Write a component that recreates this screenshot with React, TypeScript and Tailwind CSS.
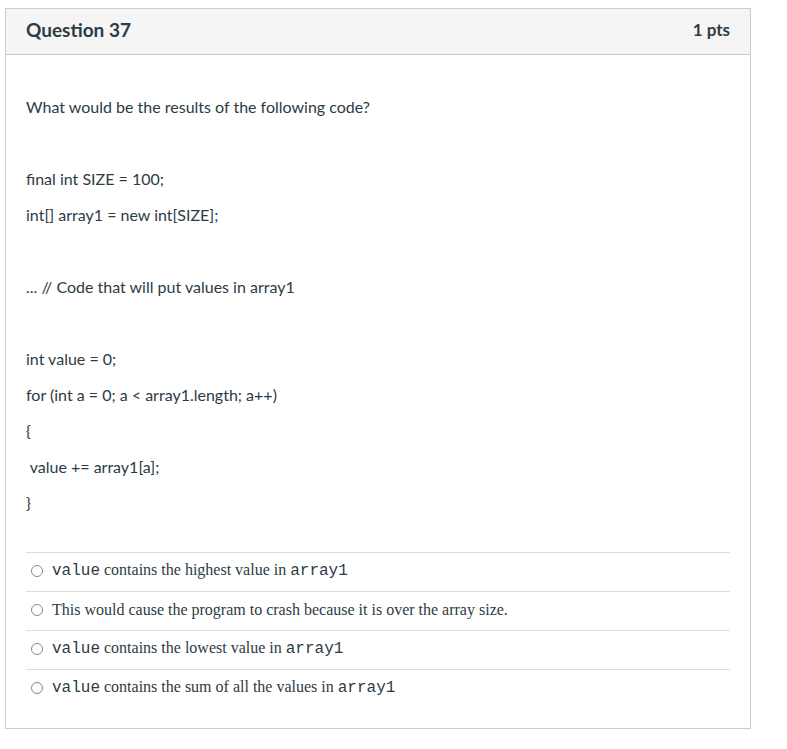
const lines: string[] = [
  "What would be the results of the following code?",
  "",
  "final int SIZE = 100;",
  "int[] array1 = new int[SIZE];",
  "",
  "... // Code that will put values in array1",
  "",
  "int value = 0;",
  "for (int a = 0; a < array1.length; a++)",
  "{",
  "\u00a0value += array1[a];",
  "}",
];

type Part = { code?: boolean; text: string };

const answers: Part[][] = [
  [{ code: true, text: "value" }, { text: " contains the highest value in " }, { code: true, text: "array1" }],
  [{ text: "This would cause the program to crash because it is over the array size." }],
  [{ code: true, text: "value" }, { text: " contains the lowest value in " }, { code: true, text: "array1" }],
  [{ code: true, text: "value" }, { text: " contains the sum of all the values in " }, { code: true, text: "array1" }],
];

export default function App() {
  return (
    <div className="min-h-[749px] bg-white pt-[8px] pl-[5px]">
      <div className="w-[746px] h-[721px] border border-[#c7cdd1] text-[#2d3b45] font-['Lato','Liberation_Sans',sans-serif]">
        <div className="h-[46px] bg-[#f5f5f5] border-b border-[#c7cdd1] px-5 flex items-center justify-between pb-[3px]">
          <span className="text-[19px] font-bold">Question 37</span>
          <span className="text-[17px] font-bold">1 pts</span>
        </div>
        <div className="px-5 pt-[34px]">
          <div className="text-[16px]">
            {lines.map((l, i) => (
              <div key={i} className="h-[36px] leading-[36px] whitespace-pre">
                {l}
              </div>
            ))}
          </div>
          <div className="mt-[31px] font-['Liberation_Serif',serif] text-[16px] text-[#2d3b45]">
            {answers.map((a, i) => (
              <div key={i} className="h-[39px] border-t border-[#dcdcdc] flex items-center pl-[5px] pb-[3px]">
                <span className="w-[12px] h-[12px] rounded-full border border-[#8a8a8a] mr-[9px] shrink-0" />
                <span>
                  {a.map((p, j) =>
                    p.code ? (
                      <span key={j} className="font-['Liberation_Mono',monospace] text-[16px]">
                        {p.text}
                      </span>
                    ) : (
                      <span key={j}>{p.text}</span>
                    )
                  )}
                </span>
              </div>
            ))}
          </div>
        </div>
      </div>
    </div>
  );
}
